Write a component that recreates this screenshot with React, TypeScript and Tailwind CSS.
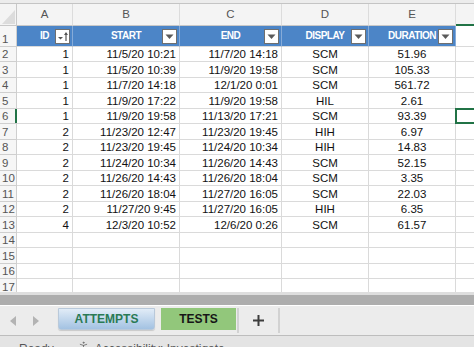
import React from "react";
import { PersonStanding } from "lucide-react";

const W = [
  "w-[17px]",
  "w-[56px]",
  "w-[107px]",
  "w-[102px]",
  "w-[87px]",
  "w-[87px]",
  "w-[87px]",
];

const letters = ["A", "B", "C", "D", "E", "F"];

const headers = ["ID", "START", "END", "DISPLAY", "DURATION"];

const rows: [number, string, string, string, string][] = [
  [1, "11/5/20 10:21", "11/7/20 14:18", "SCM", "51.96"],
  [1, "11/5/20 10:39", "11/9/20 19:58", "SCM", "105.33"],
  [1, "11/7/20 14:18", "12/1/20 0:01", "SCM", "561.72"],
  [1, "11/9/20 17:22", "11/9/20 19:58", "HIL", "2.61"],
  [1, "11/9/20 19:58", "11/13/20 17:21", "SCM", "93.39"],
  [2, "11/23/20 12:47", "11/23/20 19:45", "HIH", "6.97"],
  [2, "11/23/20 19:45", "11/24/20 10:34", "HIH", "14.83"],
  [2, "11/24/20 10:34", "11/26/20 14:43", "SCM", "52.15"],
  [2, "11/26/20 14:43", "11/26/20 18:04", "SCM", "3.35"],
  [2, "11/26/20 18:04", "11/27/20 16:05", "SCM", "22.03"],
  [2, "11/27/20 9:45", "11/27/20 16:05", "HIH", "6.35"],
  [4, "12/3/20 10:52", "12/6/20 0:26", "SCM", "61.57"],
];

const FilterButton = ({ sorted }: { sorted?: boolean }) => (
  <div className="absolute right-[2px] top-[3px] w-[15px] h-[15px] bg-white border border-[#6f6f6f] flex items-center justify-center">
    {sorted ? (
      <svg width="13" height="13" viewBox="0 0 13 13">
        <polygon points="2,7 7,7 4.5,9.5" fill="#555" />
        <line x1="10" y1="3" x2="10" y2="11" stroke="#555" strokeWidth="1.2" />
        <polygon points="8,5 12,5 10,2" fill="#555" />
      </svg>
    ) : (
      <svg width="9" height="6" viewBox="0 0 9 6">
        <polygon points="0.5,0.5 8.5,0.5 4.5,5" fill="#5a5a5a" />
      </svg>
    )}
  </div>
);

const RowHead = ({ n, active }: { n: number; active?: boolean }) => (
  <div
    className={`${W[0]} relative shrink-0 border-r border-b border-[#cfcfcf] bg-[#f6f6f6] text-[#555] text-[11.5px] pl-[2px] flex items-end leading-[14px]`}
  >
    {n}
    {active && <div className="absolute right-[-1px] top-0 bottom-0 w-[2px] bg-[#217346]" />}
  </div>
);

export default function App() {
  const data = [...rows, ...Array(4).fill(null)] as ([number, string, string, string, string] | null)[];
  return (
    <div
      className="w-[474px] h-[347px] overflow-hidden bg-white flex flex-col"
      style={{ fontFamily: "'Liberation Sans', Arial, sans-serif" }}
    >
      <div className="h-[4px] shrink-0 bg-[#ececec] border-b border-[#c4c4c4]" />

      {/* grid */}
      <div className="h-[288px] shrink-0 overflow-hidden">
        {/* column letters */}
        <div className="flex h-[22px] w-max">
          <div className={`${W[0]} shrink-0 bg-[#f4f4f4] border-r border-b border-[#c8c8c8] relative`}>
            <svg className="absolute left-0 top-0" width="17" height="22" viewBox="0 0 17 22">
              <polygon points="2,20 15,6 15,20" fill="#dcdcdc" />
            </svg>
          </div>
          {letters.map((l, i) => (
            <div
              key={l}
              className={`${W[i + 1]} shrink-0 bg-[#f4f4f4] border-r border-[#dcdcdc] flex items-center justify-center text-[11.5px] text-[#555] ${
                i === 5 ? "border-b-2 border-b-[#217346]" : "border-b border-b-[#c8c8c8]"
              }`}
            >
              {l}
            </div>
          ))}
        </div>

        {/* row 1 table header */}
        <div className="flex h-[20.5px] w-max">
          <RowHead n={1} />
          {headers.map((h, i) => (
            <div
              key={h}
              className={`${W[i + 1]} shrink-0 relative bg-[#4c85c7] border-r border-[#86abd8] border-b border-b-[#dadada] flex items-center justify-center text-white font-bold text-[10px] tracking-[-0.5px]`}
            >
              {h}
              <FilterButton sorted={i === 0} />
            </div>
          ))}
          <div className={`${W[6]} shrink-0 border-r border-b border-[#dadada]`} />
        </div>

        {data.map((r, idx) => {
          const n = idx + 2;
          return (
            <div key={n} className="flex h-[15.5px] w-max text-[11.5px] text-[#111] leading-[14px]">
              <RowHead n={n} active={n === 6} />
              <div className={`${W[1]} shrink-0 border-r border-b border-[#dadada] flex items-end justify-end pr-[3px]`}>
                {r ? r[0] : ""}
              </div>
              <div className={`${W[2]} shrink-0 border-r border-b border-[#dadada] flex items-end justify-end pr-[3px]`}>
                {r ? r[1] : ""}
              </div>
              <div className={`${W[3]} shrink-0 border-r border-b border-[#dadada] flex items-end justify-end pr-[3px]`}>
                {r ? r[2] : ""}
              </div>
              <div className={`${W[4]} shrink-0 border-r border-b border-[#dadada] flex items-end justify-center`}>
                {r ? r[3] : ""}
              </div>
              <div className={`${W[5]} shrink-0 border-r border-b border-[#dadada] flex items-end justify-center`}>
                {r ? r[4] : ""}
              </div>
              <div className={`${W[6]} shrink-0 relative border-r border-b border-[#dadada]`}>
                {n === 6 && <div className="absolute inset-[-1px] border-2 border-[#217346]" />}
              </div>
            </div>
          );
        })}
      </div>

      {/* scroll band */}
      <div className="h-[3px] shrink-0 bg-[#dedede]" />
      <div className="h-[10px] shrink-0 bg-[#adadad]" />
      <div className="h-[1px] shrink-0 bg-white" />

      {/* sheet tabs */}
      <div className="h-[29px] shrink-0 bg-[#ececec] flex items-start">
        <div className="w-[58px] h-full shrink-0 flex items-center gap-[17px] pl-[10px]">
          <svg width="6" height="10" viewBox="0 0 6 10">
            <polygon points="6,0 6,10 0,5" fill="#b3b3b3" />
          </svg>
          <svg width="6" height="10" viewBox="0 0 6 10">
            <polygon points="0,0 0,10 6,5" fill="#b3b3b3" />
          </svg>
        </div>
        <div className="w-[97px] h-[22px] mt-[2px] shrink-0 rounded-b-[3px] border border-[#b9c9da] bg-gradient-to-b from-[#e1ecf7] to-[#a3c2e2] shadow-[0_1px_1px_rgba(0,0,0,0.15)] flex items-center justify-center text-[12px] font-bold text-[#2a7a55]">
          ATTEMPTS
        </div>
        <div className="w-[75px] h-[22px] mt-[2px] ml-[6px] shrink-0 bg-[#92c77b] flex items-center justify-center text-[12px] font-bold text-[#161616]">
          TESTS
        </div>
        <div className="w-[2px] h-[25px] mt-[2px] ml-[1px] shrink-0 bg-[#d2d2d2]" />
        <div className="w-[39px] h-full shrink-0 flex items-center justify-center">
          <svg width="11" height="11" viewBox="0 0 11 11">
            <line x1="5.5" y1="0" x2="5.5" y2="11" stroke="#3d3d3d" strokeWidth="2" />
            <line x1="0" y1="5.5" x2="11" y2="5.5" stroke="#3d3d3d" strokeWidth="2" />
          </svg>
        </div>
        <div className="w-[2px] h-[25px] mt-[2px] shrink-0 bg-[#d2d2d2]" />
      </div>

      {/* status bar */}
      <div className="flex-1 border-t border-[#bdbdbd] bg-[#e4e4e4] flex items-start pt-[6px] pl-[19px] text-[12px] text-[#555] leading-[14px]">
        <span>Ready</span>
        <PersonStanding size={13} className="ml-[23px] -mt-[2px] text-[#666]" strokeWidth={1.5} />
        <span className="ml-[5px]">Accessibility: Investigate</span>
      </div>
    </div>
  );
}
